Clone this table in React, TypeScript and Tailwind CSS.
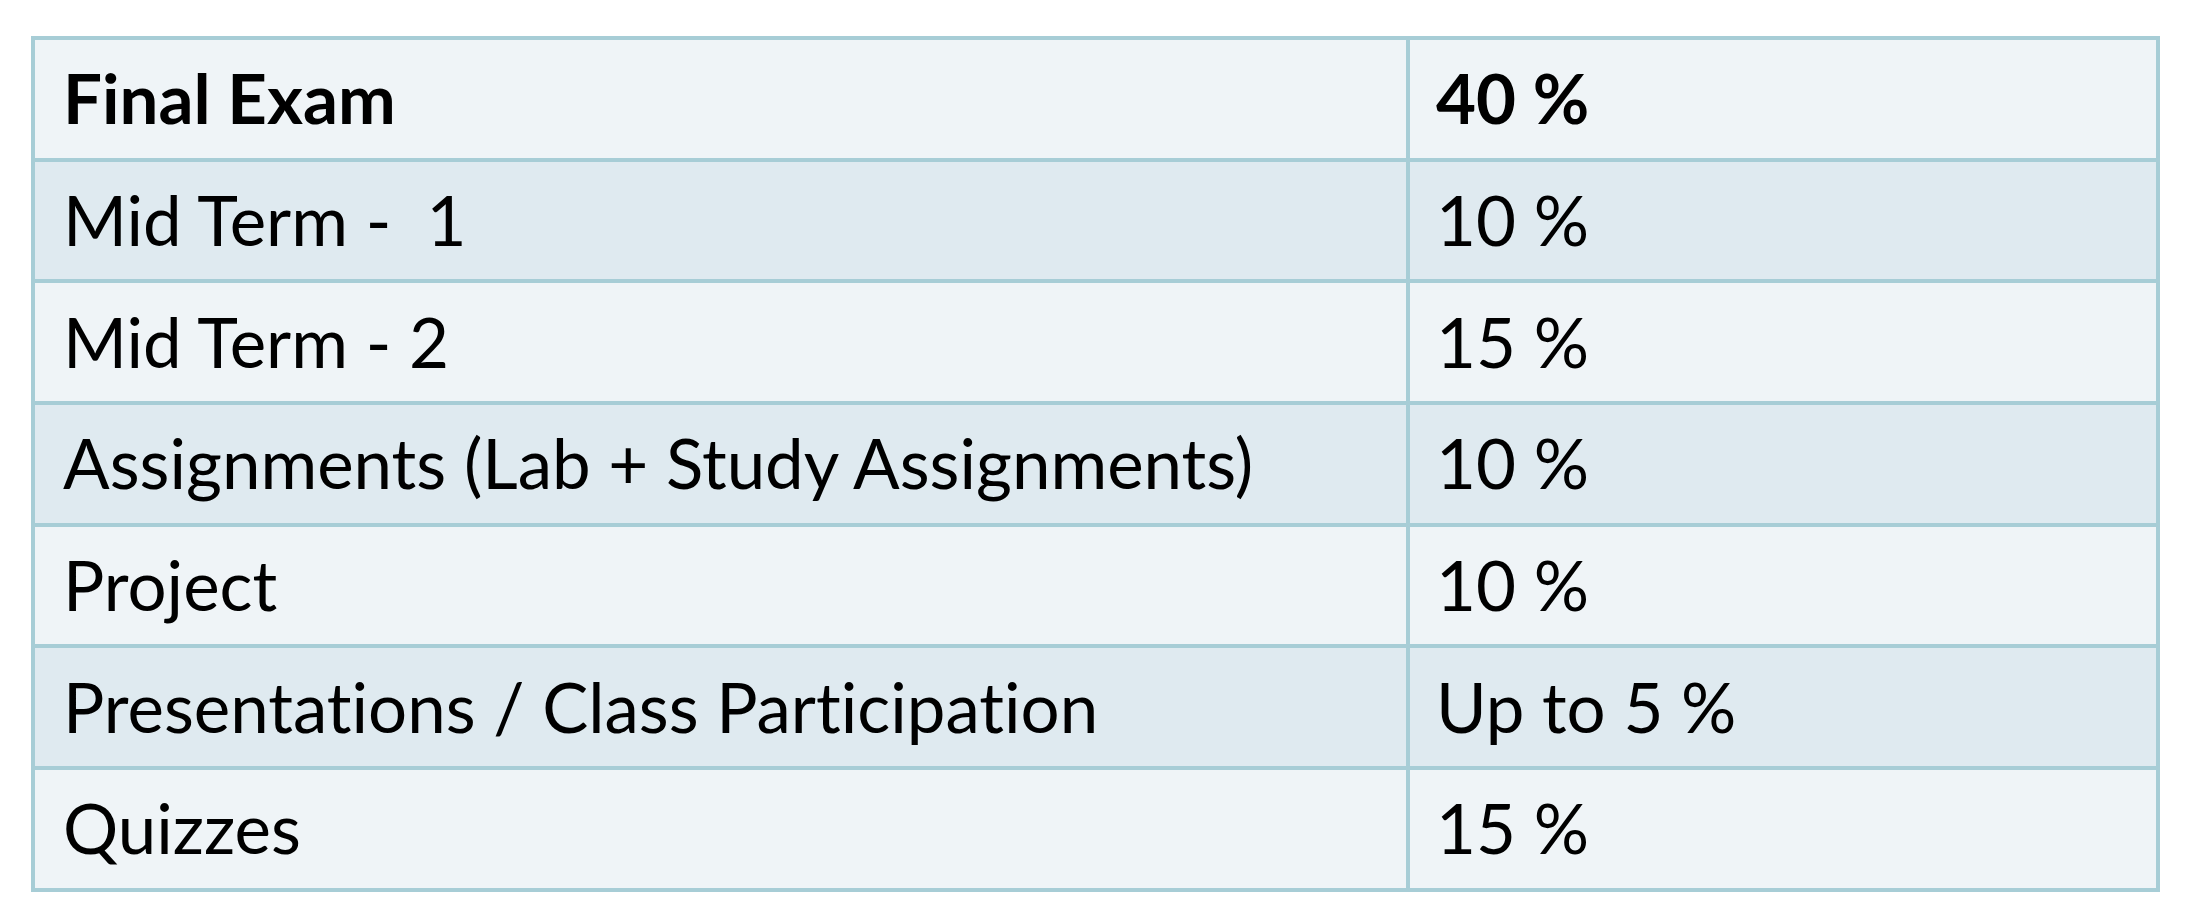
const rows: [string, string][] = [
  ["Final Exam", "40 %"],
  ["Mid Term -  1", "10 %"],
  ["Mid Term - 2", "15 %"],
  ["Assignments (Lab + Study Assignments)", "10 %"],
  ["Project", "10 %"],
  ["Presentations / Class Participation", "Up to 5 %"],
  ["Quizzes", "15 %"],
];

export default function App() {
  return (
    <div className="min-h-screen w-[2190px] bg-white pl-[31px] pt-[36px] font-['Lato',sans-serif] text-black [font-variant-ligatures:none]">
      <div className="grid w-[2129px] grid-cols-[1371px_746px] gap-[4px] bg-[#a7cdd6] p-[4px]">
        {rows.map(([label, weight], i) => {
          const bg = i % 2 === 0 ? "bg-[#eff4f7]" : "bg-[#dfeaf0]";
          const bold = i === 0 ? "font-bold" : "font-normal";
          return [
            <div key={`l${i}`} className={`flex h-[117.7px] items-center whitespace-pre pb-[2px] pl-[28px] text-[69px] leading-none ${bg} ${bold}`}>
              {label}
            </div>,
            <div key={`r${i}`} className={`flex h-[117.7px] items-center whitespace-pre pb-[2px] pl-[26px] text-[69px] leading-none ${bg} ${bold}`}>
              {weight}
            </div>,
          ];
        })}
      </div>
    </div>
  );
}
